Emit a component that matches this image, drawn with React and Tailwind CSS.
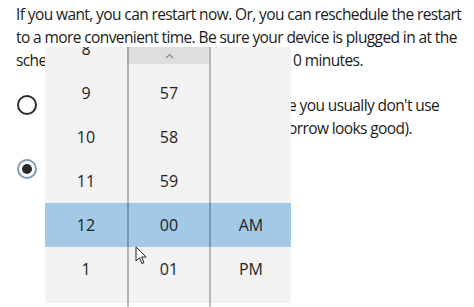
import React from 'react';

const hours = ['8', '9', '10', '11', '12', '1'];
const minutes = ['56', '57', '58', '59', '00', '01'];
const periods = ['', '', '', '', 'AM', 'PM'];

function Column({ items, first, header }) {
  const sep = first ? '' : 'border-l-2 border-black/25';
  return (
    <div className="relative flex-1 flex flex-col">
      {header && (
        <div className={`absolute top-0 left-0 right-0 h-[17px] bg-[#dedede] flex items-center justify-center z-10 ${sep}`}>
          <svg width="9" height="6" viewBox="0 0 9 6" fill="none">
            <path d="M1 5 L4.5 1.5 L8 5" stroke="#8a8a8a" strokeWidth="1.2" />
          </svg>
        </div>
      )}
      <div className="-mt-[20px] flex flex-col">
        {items.map((v, i) => (
          <div
            key={i}
            className={`h-[44px] flex items-center justify-center text-[16px] text-[#1f1f1f] ${
              i === 4 ? 'bg-[#a2c9e5]' : 'bg-[#f2f2f2]'
            } ${sep}`}
          >
            {v}
          </div>
        ))}
        <div className={`h-[12px] bg-[#f2f2f2] ${sep}`} />
        <div className={`h-[8px] bg-white ${sep}`} />
      </div>
    </div>
  );
}

export default function App() {
  return (
    <div
      className="relative w-[474px] h-[307px] bg-white overflow-hidden text-[#1b1b1b]"
      style={{ fontFamily: '"Open Sans", "Noto Sans", sans-serif' }}
    >
      {/* ── Message ── */}
      <div className="pl-[16px] pt-[3px] text-[15.5px] leading-[23px] tracking-[-0.6px] whitespace-nowrap">
        <div>If you want, you can restart now. Or, you can reschedule the restart</div>
        <div>to a more convenient time. Be sure your device is plugged in at the</div>
        <div className="flex">
          <span className="w-[274px] overflow-hidden">scheduled time. The install process will take 10-2</span>
          <span className="ml-[3px]">0 minutes.</span>
        </div>
      </div>

      {/* ── Options ── */}
      <div className="mt-[22px] pl-[17px] flex flex-col gap-[19px] text-[15.5px] leading-[23px] tracking-[-0.6px] whitespace-nowrap">
        <div className="flex items-start gap-[15px]">
          <div className="mt-[1px] w-[20px] h-[20px] rounded-full border-2 border-[#2b2b2b]" />
          <div>
            <div>
              <span className="inline-block w-[236px] overflow-hidden align-bottom">We'll schedule a restart during a tim</span>
              e you usually don't use
            </div>
            <div>
              <span className="inline-block w-[236px] overflow-hidden align-bottom">your device (right now 3:30 AM tom</span>
              orrow looks good).
            </div>
          </div>
        </div>
        <div className="flex items-start gap-[15px]">
          <div className="w-[20px] h-[20px] rounded-full border-2 border-[#7d9cb1] flex items-center justify-center">
            <div className="w-[10px] h-[10px] rounded-full bg-[#2b2b2b]" />
          </div>
          <div>Select a restart time</div>
        </div>
      </div>

      {/* ── Time picker flyout ── */}
      <div className="absolute left-[45px] top-[47px] w-[246px] h-[260px] overflow-hidden flex">
        <Column items={hours} first />
        <Column items={minutes} header />
        <Column items={periods} />
      </div>

      {/* ── Mouse cursor ── */}
      <svg className="absolute left-[135px] top-[246px]" width="13" height="20" viewBox="0 0 13 20">
        <path d="M1 1 L1 15 L4.5 11.8 L7 17.5 L9 16.6 L6.6 11 L11.2 11 Z" fill="white" stroke="#222" strokeWidth="1" strokeLinejoin="round" />
      </svg>
    </div>
  );
}
